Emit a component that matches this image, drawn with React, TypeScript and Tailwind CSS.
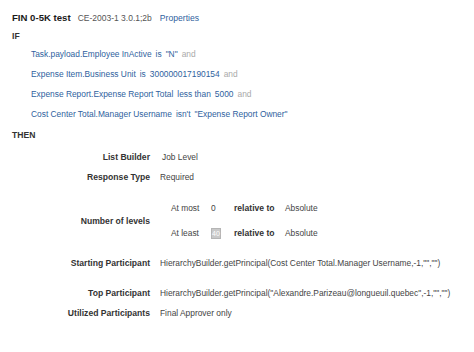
import React from "react";

const Cond = ({ parts, and = true }: { parts: string[]; and?: boolean }) => (
  <div className="h-[20px] flex items-center gap-[4px] pl-[19px] text-[8.4px] text-[#2f5f9e] whitespace-nowrap">
    {parts.map((p, i) => (
      <span key={i}>{p}</span>
    ))}
    {and && <span className="text-[#a9a9a9]">and</span>}
  </div>
);

const Row = ({ label, children, cls = "" }: { label: string; children: React.ReactNode; cls?: string }) => (
  <div className={`flex items-center ${cls}`}>
    <div className="w-[138px] text-right font-bold text-[#333]">{label}</div>
    <div className="ml-[10px] text-[8.4px] text-[#444] whitespace-nowrap">{children}</div>
  </div>
);

export default function App() {
  return (
    <div
      className="w-[474px] h-[352px] bg-white pl-[12px] pt-[8px] text-[8.6px] leading-[20px] overflow-hidden"
      style={{ fontFamily: '"Liberation Sans", Arial, sans-serif' }}
    >
      <div className="h-[20px] flex items-center whitespace-nowrap">
        <span className="font-bold text-[9.6px] text-[#1a1a1a]">FIN 0-5K test</span>
        <span className="ml-[7px] text-[8.5px] text-[#555]">CE-2003-1 3.0.1;2b</span>
        <span className="ml-[8px] text-[8.6px] text-[#2f5f9e]">Properties</span>
      </div>
      <div className="h-[16px] flex items-center font-bold text-[#333]">IF</div>
      <Cond parts={["Task.payload.Employee InActive", "is", '"N"']} />
      <Cond parts={["Expense Item.Business Unit", "is", "300000017190154"]} />
      <Cond parts={["Expense Report.Expense Report Total", "less than", "5000"]} />
      <Cond parts={["Cost Center Total.Manager Username", "isn't", '"Expense Report Owner"']} and={false} />
      <div className="h-[21px] flex items-center font-bold text-[#333]">THEN</div>
      <Row label="List Builder" cls="h-[20px] mt-[2px]">
        <span className="ml-[2px]">Job Level</span>
      </Row>
      <Row label="Response Type" cls="h-[20px]">Required</Row>
      <Row label="Number of levels" cls="mt-[11px]">
        <div className="flex flex-col gap-[5px] pl-[11px]">
          <div className="h-[20px] flex items-center">
            <span className="w-[40px]">At most</span>
            <span className="w-[23px]">0</span>
            <span className="w-[51px] font-bold text-[8.6px] text-[#333]">relative to</span>
            <span>Absolute</span>
          </div>
          <div className="h-[20px] flex items-center">
            <span className="w-[40px]">At least</span>
            <span className="w-[23px] flex items-center">
              <span className="inline-block h-[11px] w-[10px] bg-[#c9c9c9] border border-[#b5b5b5] text-white text-[7px] leading-[9px] text-center">40</span>
            </span>
            <span className="w-[51px] font-bold text-[8.6px] text-[#333]">relative to</span>
            <span>Absolute</span>
          </div>
        </div>
      </Row>
      <Row label="Starting Participant" cls="h-[20px] mt-[10px]">
        HierarchyBuilder.getPrincipal(Cost Center Total.Manager Username,-1,"","")
      </Row>
      <Row label="Top Participant" cls="h-[20px] mt-[10px]">
        HierarchyBuilder.getPrincipal("Alexandre.Parizeau@longueuil.quebec",-1,"","")
      </Row>
      <Row label="Utilized Participants" cls="h-[20px]">Final Approver only</Row>
    </div>
  );
}
